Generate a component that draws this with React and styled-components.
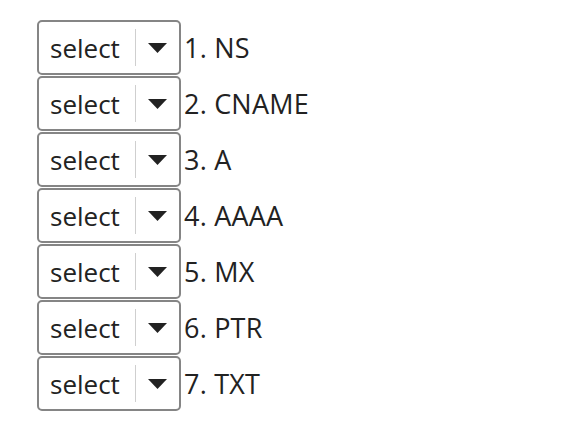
import React from "react";
import styled, { createGlobalStyle } from "styled-components";

const GlobalStyle = createGlobalStyle`
  body {
    margin: 8px;
    background: #fff;
    font-family: "Open Sans", "Liberation Sans", sans-serif;
    color: #222;
  }
`;

const List = styled.div`
  display: flex;
  flex-direction: column;
  gap: 1px;
  padding: 12px 0 0 29px;
`;

const Row = styled.div`
  display: flex;
  align-items: center;
  gap: 3px;
`;

const SelectBox = styled.div`
  box-sizing: border-box;
  width: 144px;
  height: 55px;
  border: 2px solid #858585;
  border-radius: 5px;
  display: flex;
  align-items: center;
  background: #fff;
`;

const Value = styled.span`
  font-size: 26px;
  padding-left: 11px;
  width: 85px;
  white-space: nowrap;
`;

const Divider = styled.span`
  width: 1px;
  align-self: stretch;
  margin: 7px 0;
  background: #cfcfcf;
`;

const Arrow = styled.span`
  flex: 1;
  display: flex;
  justify-content: center;
  align-items: center;
`;

const Label = styled.span`
  font-size: 27px;
  letter-spacing: 0.2px;
`;

const types = ["NS", "CNAME", "A", "AAAA", "MX", "PTR", "TXT"];

export default function App() {
  return (
    <>
      <GlobalStyle />
      <List>
        {types.map((t, i) => (
          <Row key={t}>
            <SelectBox>
              <Value>select</Value>
              <Divider />
              <Arrow>
                <svg width="19" height="10" viewBox="0 0 19 10">
                  <path d="M0 0 H19 L9.5 10 Z" fill="#222" />
                </svg>
              </Arrow>
            </SelectBox>
            <Label>
              {i + 1}. {t}
            </Label>
          </Row>
        ))}
      </List>
    </>
  );
}
